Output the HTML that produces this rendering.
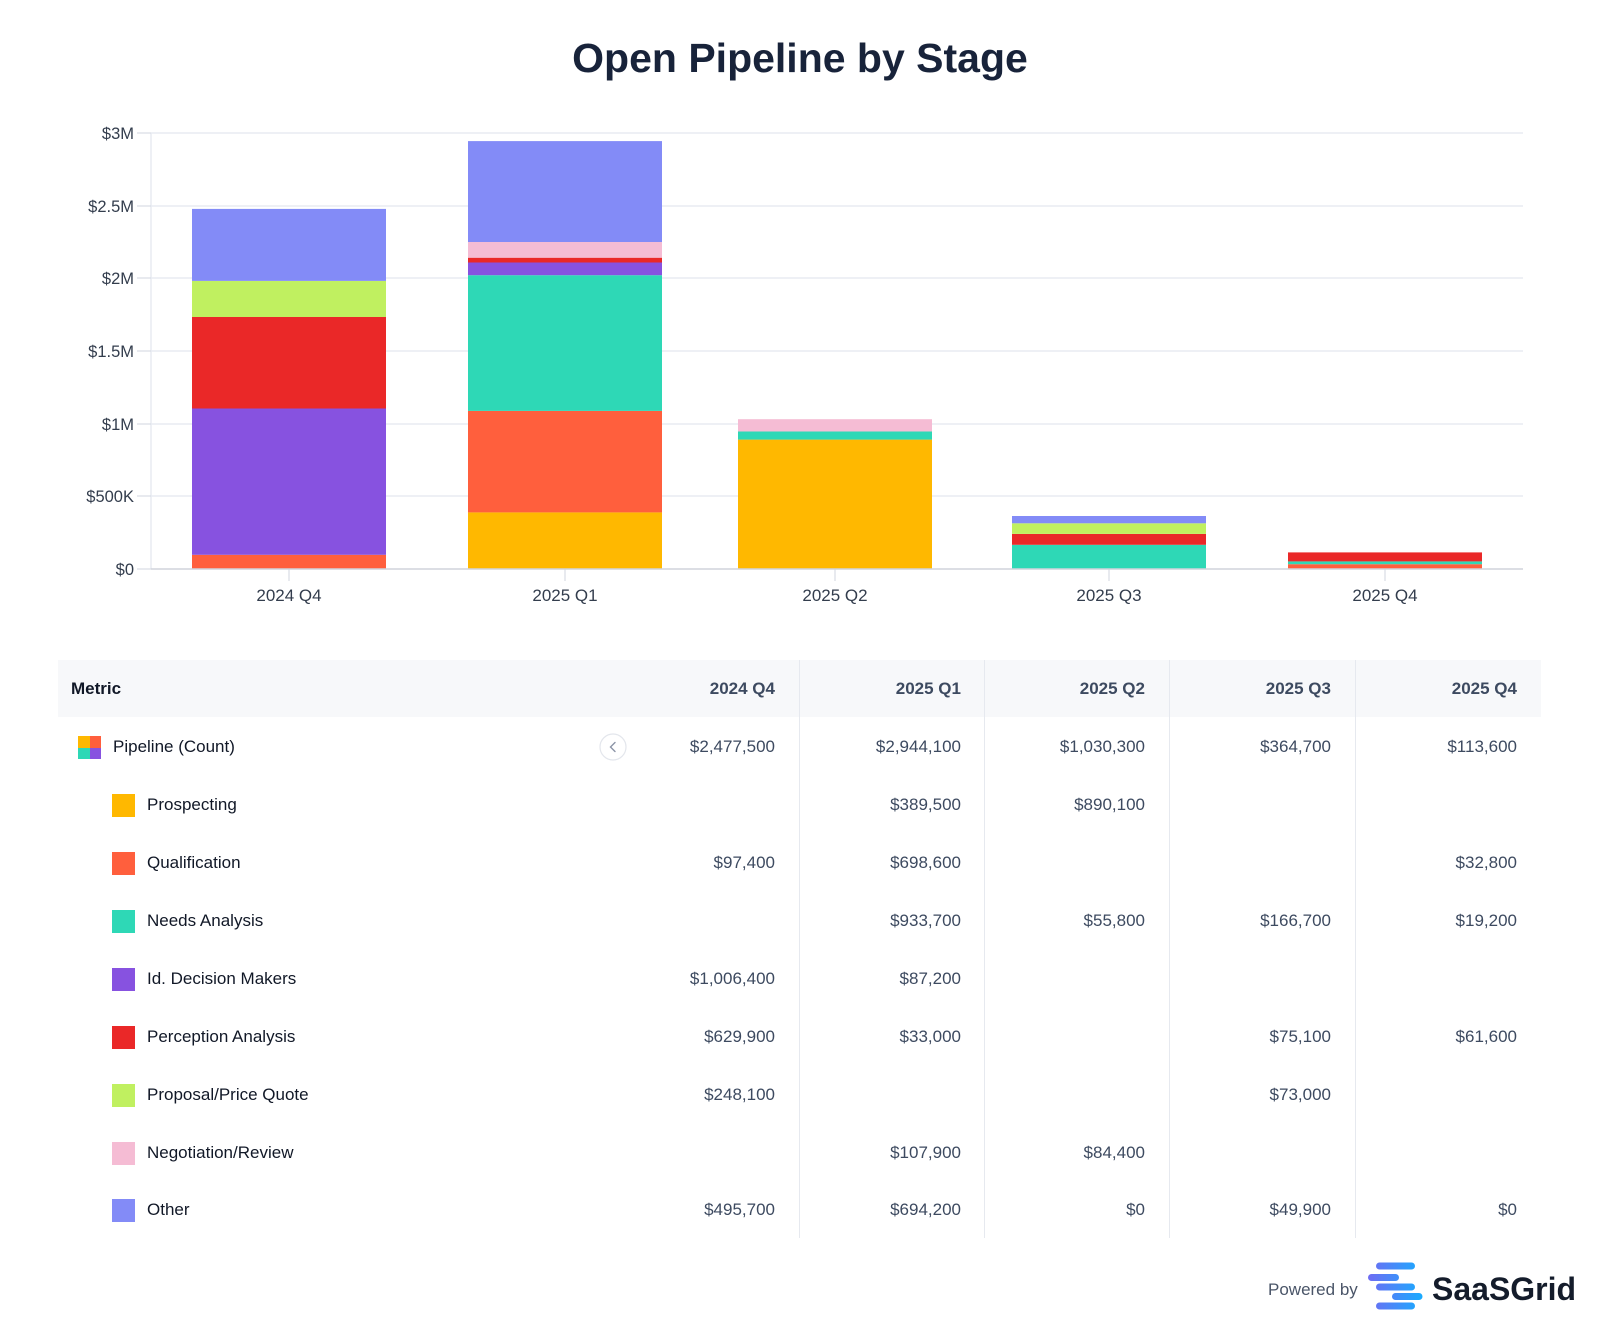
<!DOCTYPE html>
<html><head><meta charset="utf-8"><style>
*{margin:0;padding:0;box-sizing:border-box}
body{width:1600px;height:1334px;background:#fff;font-family:"Liberation Sans",sans-serif;position:relative;overflow:hidden;color:#111827}
.title{position:absolute;left:0;width:1600px;top:35px;text-align:center;font-size:41px;font-weight:bold;color:#18233a;letter-spacing:0px}
.hdr{position:absolute;left:58px;top:660px;width:1483px;height:57px;background:#f7f8fa}
.vd{position:absolute;top:660px;width:1px;height:578px;background:#e6e9ef}
.t{position:absolute;font-size:17px;line-height:20px;white-space:nowrap}
.h{font-weight:bold;color:#111827}
.v{color:#3d4a60;text-align:right;width:180px}
.lab{color:#111827}
.sw{position:absolute;width:23px;height:23px}
</style></head><body>
<div class="title">Open Pipeline by Stage</div>

<svg width="1600" height="640" style="position:absolute;left:0;top:0" font-family="Liberation Sans, sans-serif">
<g stroke="#e8ebf2" stroke-width="1.5">
<line x1="151" y1="133" x2="1523" y2="133"/>
<line x1="151" y1="206" x2="1523" y2="206"/>
<line x1="151" y1="278" x2="1523" y2="278"/>
<line x1="151" y1="351" x2="1523" y2="351"/>
<line x1="151" y1="424" x2="1523" y2="424"/>
<line x1="151" y1="496" x2="1523" y2="496"/>
<line x1="151" y1="133" x2="151" y2="569"/>
</g>
<g stroke="#d8dce4" stroke-width="1.2">
<line x1="137" y1="133" x2="151" y2="133"/><line x1="137" y1="206" x2="151" y2="206"/><line x1="137" y1="278" x2="151" y2="278"/><line x1="137" y1="351" x2="151" y2="351"/><line x1="137" y1="424" x2="151" y2="424"/><line x1="137" y1="496" x2="151" y2="496"/><line x1="137" y1="569" x2="151" y2="569"/>
<line x1="289" y1="569" x2="289" y2="581"/><line x1="565" y1="569" x2="565" y2="581"/><line x1="835" y1="569" x2="835" y2="581"/><line x1="1109" y1="569" x2="1109" y2="581"/><line x1="1385" y1="569" x2="1385" y2="581"/>
</g>
<g font-size="16.5" fill="#333d4d" text-anchor="end">
<text x="134" y="139">$3M</text><text x="134" y="212">$2.5M</text><text x="134" y="284">$2M</text><text x="134" y="357">$1.5M</text><text x="134" y="430">$1M</text><text x="134" y="502">$500K</text><text x="134" y="575">$0</text>
</g>
<g font-size="17" fill="#333d4d" text-anchor="middle">
<text x="289" y="601">2024 Q4</text><text x="565" y="601">2025 Q1</text><text x="835" y="601">2025 Q2</text><text x="1109" y="601">2025 Q3</text><text x="1385" y="601">2025 Q4</text>
</g>
<rect x="192" y="554.8" width="194" height="14.2" fill="#FF5F3D"/>
<rect x="192" y="408.5" width="194" height="146.3" fill="#8752E0"/>
<rect x="192" y="317" width="194" height="91.5" fill="#EA2828"/>
<rect x="192" y="280.9" width="194" height="36.1" fill="#C0F060"/>
<rect x="192" y="208.9" width="194" height="72" fill="#838BF7"/>
<rect x="468" y="512.4" width="194" height="56.6" fill="#FFB800"/>
<rect x="468" y="410.9" width="194" height="101.5" fill="#FF5F3D"/>
<rect x="468" y="275.2" width="194" height="135.7" fill="#2ED8B6"/>
<rect x="468" y="262.5" width="194" height="12.7" fill="#8752E0"/>
<rect x="468" y="257.7" width="194" height="4.8" fill="#EA2828"/>
<rect x="468" y="242" width="194" height="15.7" fill="#F5BCD4"/>
<rect x="468" y="141.1" width="194" height="100.9" fill="#838BF7"/>
<rect x="738" y="439.6" width="194" height="129.4" fill="#FFB800"/>
<rect x="738" y="431.5" width="194" height="8.1" fill="#2ED8B6"/>
<rect x="738" y="419.2" width="194" height="12.3" fill="#F5BCD4"/>
<rect x="1012" y="544.8" width="194" height="24.2" fill="#2ED8B6"/>
<rect x="1012" y="533.9" width="194" height="10.9" fill="#EA2828"/>
<rect x="1012" y="523.3" width="194" height="10.6" fill="#C0F060"/>
<rect x="1012" y="516" width="194" height="7.3" fill="#838BF7"/>
<rect x="1288" y="564.2" width="194" height="4.8" fill="#FF5F3D"/>
<rect x="1288" y="561.4" width="194" height="2.8" fill="#2ED8B6"/>
<rect x="1288" y="552.4" width="194" height="9" fill="#EA2828"/>
<line x1="151" y1="569" x2="1523" y2="569" stroke="#d0d4dc" stroke-width="1.5"/>
</svg>

<div class="hdr"></div>
<div class="vd" style="left:799px"></div>
<div class="vd" style="left:984px"></div>
<div class="vd" style="left:1169px"></div>
<div class="vd" style="left:1355px"></div>

<div class="t h" style="left:71px;top:679px">Metric</div>
<div class="t h v" style="left:595px;top:679px">2024 Q4</div>
<div class="t h v" style="left:781px;top:679px">2025 Q1</div>
<div class="t h v" style="left:965px;top:679px">2025 Q2</div>
<div class="t h v" style="left:1151px;top:679px">2025 Q3</div>
<div class="t h v" style="left:1337px;top:679px">2025 Q4</div>

<div class="sw" style="left:78px;top:736px;width:12px;height:12px;background:#FFB800"></div>
<div class="sw" style="left:90px;top:736px;width:11px;height:12px;background:#FF5F3D"></div>
<div class="sw" style="left:78px;top:748px;width:12px;height:11px;background:#2ED8B6"></div>
<div class="sw" style="left:90px;top:748px;width:11px;height:11px;background:#8752E0"></div>
<div class="t lab" style="left:113px;top:737px">Pipeline (Count)</div>
<svg style="position:absolute;left:599px;top:733px" width="28" height="28"><circle cx="14" cy="14" r="13" fill="#fff" stroke="#e3e6ec" stroke-width="1.2"/><path d="M16 9.5 L11.5 14 L16 18.5" fill="none" stroke="#8a93a6" stroke-width="1.4" stroke-linecap="round"/></svg>

<div class="t v" style="left:595px;top:737px">$2,477,500</div>
<div class="t v" style="left:781px;top:737px">$2,944,100</div>
<div class="t v" style="left:965px;top:737px">$1,030,300</div>
<div class="t v" style="left:1151px;top:737px">$364,700</div>
<div class="t v" style="left:1337px;top:737px">$113,600</div>

<div class="sw" style="left:112px;top:794px;background:#FFB800"></div>
<div class="t lab" style="left:147px;top:795px">Prospecting</div>
<div class="t v" style="left:781px;top:795px">$389,500</div>
<div class="t v" style="left:965px;top:795px">$890,100</div>

<div class="sw" style="left:112px;top:852px;background:#FF5F3D"></div>
<div class="t lab" style="left:147px;top:853px">Qualification</div>
<div class="t v" style="left:595px;top:853px">$97,400</div>
<div class="t v" style="left:781px;top:853px">$698,600</div>
<div class="t v" style="left:1337px;top:853px">$32,800</div>

<div class="sw" style="left:112px;top:910px;background:#2ED8B6"></div>
<div class="t lab" style="left:147px;top:911px">Needs Analysis</div>
<div class="t v" style="left:781px;top:911px">$933,700</div>
<div class="t v" style="left:965px;top:911px">$55,800</div>
<div class="t v" style="left:1151px;top:911px">$166,700</div>
<div class="t v" style="left:1337px;top:911px">$19,200</div>

<div class="sw" style="left:112px;top:968px;background:#8752E0"></div>
<div class="t lab" style="left:147px;top:969px">Id. Decision Makers</div>
<div class="t v" style="left:595px;top:969px">$1,006,400</div>
<div class="t v" style="left:781px;top:969px">$87,200</div>

<div class="sw" style="left:112px;top:1026px;background:#EA2828"></div>
<div class="t lab" style="left:147px;top:1027px">Perception Analysis</div>
<div class="t v" style="left:595px;top:1027px">$629,900</div>
<div class="t v" style="left:781px;top:1027px">$33,000</div>
<div class="t v" style="left:1151px;top:1027px">$75,100</div>
<div class="t v" style="left:1337px;top:1027px">$61,600</div>

<div class="sw" style="left:112px;top:1084px;background:#C0F060"></div>
<div class="t lab" style="left:147px;top:1085px">Proposal/Price Quote</div>
<div class="t v" style="left:595px;top:1085px">$248,100</div>
<div class="t v" style="left:1151px;top:1085px">$73,000</div>

<div class="sw" style="left:112px;top:1142px;background:#F5BCD4"></div>
<div class="t lab" style="left:147px;top:1143px">Negotiation/Review</div>
<div class="t v" style="left:781px;top:1143px">$107,900</div>
<div class="t v" style="left:965px;top:1143px">$84,400</div>

<div class="sw" style="left:112px;top:1199px;background:#838BF7"></div>
<div class="t lab" style="left:147px;top:1200px">Other</div>
<div class="t v" style="left:595px;top:1200px">$495,700</div>
<div class="t v" style="left:781px;top:1200px">$694,200</div>
<div class="t v" style="left:965px;top:1200px">$0</div>
<div class="t v" style="left:1151px;top:1200px">$49,900</div>
<div class="t v" style="left:1337px;top:1200px">$0</div>

<div class="t" style="left:1268px;top:1280px;color:#4a5568;font-size:17px">Powered by</div>
<svg style="position:absolute;left:1364px;top:1258px" width="64" height="56">
<defs><linearGradient id="g" gradientUnits="userSpaceOnUse" x1="4" y1="0" x2="58" y2="0"><stop offset="0" stop-color="#6f6cf3"/><stop offset="1" stop-color="#19abff"/></linearGradient></defs>
<g stroke="url(#g)" stroke-width="7" stroke-linecap="round">
<line x1="15.5" y1="8" x2="47.5" y2="8"/>
<line x1="7.5" y1="19.5" x2="31.5" y2="19.5"/>
<line x1="15.5" y1="29" x2="47.5" y2="29"/>
<line x1="31.5" y1="38.5" x2="55" y2="38.5"/>
<line x1="15.5" y1="48" x2="47.5" y2="48"/>
</g></svg>
<div class="t" style="left:1432px;top:1271px;font-size:32px;line-height:36px;font-weight:bold;color:#141c2b">SaaSGrid</div>
</body></html>
